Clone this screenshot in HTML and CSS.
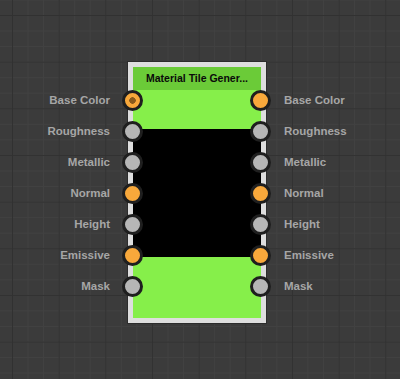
FILE: index.html
```html
<!DOCTYPE html>
<html>
<head>
<meta charset="utf-8">
<link rel="stylesheet" href="styles.css">
</head>
<body>
<div class="canvas">
  <div class="node">
    <div class="node-header">Material Tile Gener...</div>
    <div class="node-body">
      <div class="preview"></div>
    </div>
    <div class="ports">
      <div class="port-row"><span class="label left">Base Color</span><span class="port orange connected"></span><span></span><span class="port orange"></span><span class="label right">Base Color</span></div>
      <div class="port-row"><span class="label left">Roughness</span><span class="port gray"></span><span></span><span class="port gray"></span><span class="label right">Roughness</span></div>
      <div class="port-row"><span class="label left">Metallic</span><span class="port gray"></span><span></span><span class="port gray"></span><span class="label right">Metallic</span></div>
      <div class="port-row"><span class="label left">Normal</span><span class="port orange"></span><span></span><span class="port orange"></span><span class="label right">Normal</span></div>
      <div class="port-row"><span class="label left">Height</span><span class="port gray"></span><span></span><span class="port gray"></span><span class="label right">Height</span></div>
      <div class="port-row"><span class="label left">Emissive</span><span class="port orange"></span><span></span><span class="port orange"></span><span class="label right">Emissive</span></div>
      <div class="port-row"><span class="label left">Mask</span><span class="port gray"></span><span></span><span class="port gray"></span><span class="label right">Mask</span></div>
    </div>
  </div>
</div>
</body>
</html>
```

FILE: styles.css
```css
html, body {
  margin: 0;
  padding: 0;
}
body {
  width: 400px;
  height: 379px;
  overflow: hidden;
  background-color: #3b3b3b;
  background-image:
    linear-gradient(to right, #313131 1px, transparent 1px),
    linear-gradient(to bottom, #313131 1px, transparent 1px),
    linear-gradient(to right, #414141 1px, transparent 1px),
    linear-gradient(to bottom, #414141 1px, transparent 1px);
  background-size: 46.67px 46.67px, 46.67px 46.67px, 15.56px 15.56px, 15.56px 15.56px;
  background-position: 12px 15px, 12px 15px, 12px 15px, 12px 15px;
  font-family: "Liberation Sans", Arial, sans-serif;
}
.canvas {
  padding: 62px 0 0 128px;
}
.node {
  position: relative;
  box-sizing: border-box;
  width: 138px;
  height: 261px;
  border: 5px solid #dedede;
  box-shadow: 0 0 0 1px #2c2c2c;
  display: flex;
  flex-direction: column;
  background: #86ef4a;
}
.node-header {
  height: 23px;
  background: #6bcb38;
  color: #0a0a0a;
  font-weight: bold;
  font-size: 10.5px;
  line-height: 23px;
  text-align: center;
  white-space: nowrap;
}
.node-body {
  flex: 1;
  padding-top: 39px;
}
.preview {
  height: 128px;
  background: #000;
}
.ports {
  position: absolute;
  left: -123px;
  top: 22.5px;
  width: 374px;
  display: flex;
  flex-direction: column;
  gap: 10px;
}
.port-row {
  display: grid;
  grid-template-columns: 112px 21px 1fr 21px 113px;
  height: 21px;
  align-items: center;
}
.port {
  box-sizing: border-box;
  width: 21px;
  height: 21px;
  border-radius: 50%;
  border: 3px solid #1f1f1f;
}
.label {
  color: #a6a6a6;
  font-weight: bold;
  font-size: 11.5px;
  white-space: nowrap;
}
.label.left {
  text-align: right;
  padding-right: 12px;
}
.label.right {
  padding-left: 13px;
}
.orange { background: #f8a83b; }
.gray { background: #b6b6b6; }
.connected {
  background: radial-gradient(circle, #8a5a1c 0 3px, #f8a83b 3.5px);
}
```
